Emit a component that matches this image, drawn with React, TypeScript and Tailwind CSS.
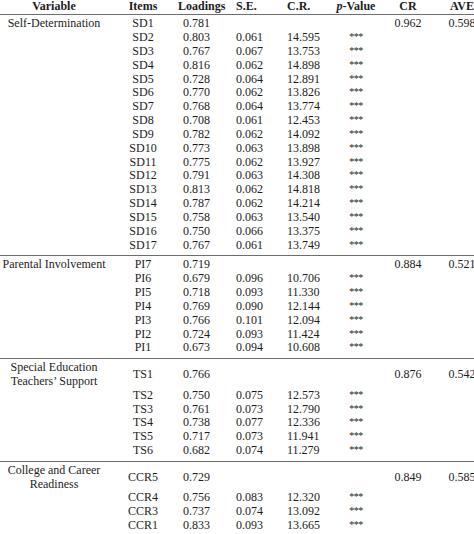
import React from 'react';

type Row = [string, string, string, string, string];

type Group = {
  name: string[];
  cr: string;
  ave: string;
  rows: Row[];
};

const groups: Group[] = [
  {
    name: ['Self-Determination'],
    cr: '0.962',
    ave: '0.598',
    rows: [
      ['SD1', '0.781', '', '', ''],
      ['SD2', '0.803', '0.061', '14.595', '***'],
      ['SD3', '0.767', '0.067', '13.753', '***'],
      ['SD4', '0.816', '0.062', '14.898', '***'],
      ['SD5', '0.728', '0.064', '12.891', '***'],
      ['SD6', '0.770', '0.062', '13.826', '***'],
      ['SD7', '0.768', '0.064', '13.774', '***'],
      ['SD8', '0.708', '0.061', '12.453', '***'],
      ['SD9', '0.782', '0.062', '14.092', '***'],
      ['SD10', '0.773', '0.063', '13.898', '***'],
      ['SD11', '0.775', '0.062', '13.927', '***'],
      ['SD12', '0.791', '0.063', '14.308', '***'],
      ['SD13', '0.813', '0.062', '14.818', '***'],
      ['SD14', '0.787', '0.062', '14.214', '***'],
      ['SD15', '0.758', '0.063', '13.540', '***'],
      ['SD16', '0.750', '0.066', '13.375', '***'],
      ['SD17', '0.767', '0.061', '13.749', '***'],
    ],
  },
  {
    name: ['Parental Involvement'],
    cr: '0.884',
    ave: '0.521',
    rows: [
      ['PI7', '0.719', '', '', ''],
      ['PI6', '0.679', '0.096', '10.706', '***'],
      ['PI5', '0.718', '0.093', '11.330', '***'],
      ['PI4', '0.769', '0.090', '12.144', '***'],
      ['PI3', '0.766', '0.101', '12.094', '***'],
      ['PI2', '0.724', '0.093', '11.424', '***'],
      ['PI1', '0.673', '0.094', '10.608', '***'],
    ],
  },
  {
    name: ['Special Education', 'Teachers\u2019 Support'],
    cr: '0.876',
    ave: '0.542',
    rows: [
      ['TS1', '0.766', '', '', ''],
      ['TS2', '0.750', '0.075', '12.573', '***'],
      ['TS3', '0.761', '0.073', '12.790', '***'],
      ['TS4', '0.738', '0.077', '12.336', '***'],
      ['TS5', '0.717', '0.073', '11.941', '***'],
      ['TS6', '0.682', '0.074', '11.279', '***'],
    ],
  },
  {
    name: ['College and Career', 'Readiness'],
    cr: '0.849',
    ave: '0.585',
    rows: [
      ['CCR5', '0.729', '', '', ''],
      ['CCR4', '0.756', '0.083', '12.320', '***'],
      ['CCR3', '0.737', '0.074', '13.092', '***'],
      ['CCR1', '0.833', '0.093', '13.665', '***'],
    ],
  },
];

const cols = 'grid grid-cols-[108px_70px_47px_62px_49px_40px_64px_44px]';

function Stars({ value }: { value: string }) {
  if (!value) return null;
  return <span className="relative -top-[1px] text-[10px] tracking-[-0.5px]">{value}</span>;
}

export default function App() {
  return (
    <div className="w-[474px] h-[534px] overflow-hidden bg-white text-[#1c1c1c]">
      <div className="w-[484px] text-[12px] leading-[13.85px] font-['Liberation_Serif',serif]">
        {/* header row */}
        <div className={`${cols} h-[14px] leading-[13.3px] font-bold border-b border-[#6e6e6e] box-content`}>
          <div className="text-center">Variable</div>
          <div className="text-center">Items</div>
          <div className="text-center">Loadings</div>
          <div className="pl-[11px]">S.E.</div>
          <div>C.R.</div>
          <div className="text-center whitespace-nowrap">
            <span className="italic">p</span>-Value
          </div>
          <div className="text-center">CR</div>
          <div className="text-center">AVE</div>
        </div>

        {groups.map((g, gi) => (
          <div
            key={g.name[0]}
            className={`${gi === 0 ? 'pt-[2.2px]' : 'pt-[2px]'} pb-[2.8px] border-b border-[#6e6e6e]`}
          >
            {g.rows.map((r, ri) => (
              <div key={r[0]} className={`${cols} items-center`}>
                <div className="text-center whitespace-nowrap">
                  {ri === 0 && g.name.map((line) => <div key={line}>{line}</div>)}
                </div>
                <div className="text-center">{r[0]}</div>
                <div className="pl-[5px]">{r[1]}</div>
                <div className="pl-[11px]">{r[2]}</div>
                <div>{r[3]}</div>
                <div className="text-center">
                  <Stars value={r[4]} />
                </div>
                <div className="text-center">{ri === 0 ? g.cr : ''}</div>
                <div className="text-center">{ri === 0 ? g.ave : ''}</div>
              </div>
            ))}
          </div>
        ))}
      </div>
    </div>
  );
}
